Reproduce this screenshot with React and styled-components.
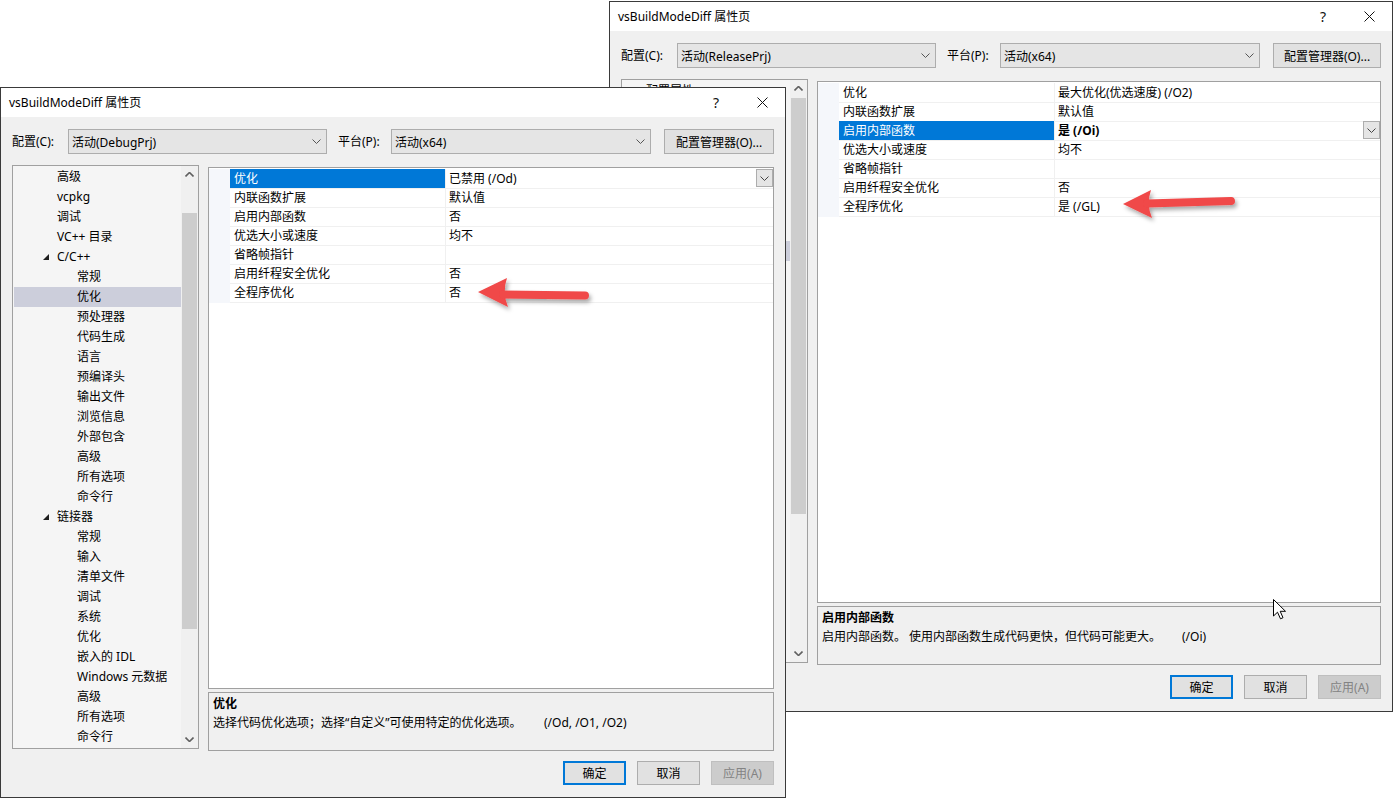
import React from 'react';
import styled, { createGlobalStyle } from 'styled-components';

const GlobalStyle = createGlobalStyle`
  html, body { margin: 0; padding: 0; background: #fff; }
  body {
    font-family: "Noto Sans", "Noto Sans CJK SC", sans-serif;
    font-size: 12px;
    color: #000;
  }
`;

const Desktop = styled.div`
  position: relative;
  width: 1395px;
  height: 798px;
  overflow: hidden;
  background: #fff;
`;

// dialogs are windows on a desktop, so they sit at their own coordinates
const Window = styled.div`
  position: absolute;
  left: ${p => p.$left}px;
  top: ${p => p.$top}px;
  width: ${p => p.$width}px;
  height: ${p => p.$height}px;
  box-sizing: border-box;
  border: 1px solid #3a3a3a;
  background: #f0f0f0;
  display: flex;
  flex-direction: column;
`;

const TitleBar = styled.div`
  height: 29px;
  flex-shrink: 0;
  background: #fff;
  display: flex;
  align-items: center;
  padding-left: 8px;
`;

const Title = styled.div`
  flex: 1;
  line-height: 16px;
  white-space: nowrap;
`;

const CaptionButton = styled.div`
  width: 46px;
  height: 29px;
  display: flex;
  align-items: center;
  justify-content: center;
  font-size: 14px;
  color: #111;
`;

const Body = styled.div`
  flex: 1;
  display: flex;
  flex-direction: column;
  padding: 12px 11px 0 11px;
`;

const Toolbar = styled.div`
  display: flex;
  align-items: center;
  height: 25px;
`;

const Label = styled.div`
  width: ${p => p.$w}px;
  margin-left: ${p => p.$ml || 0}px;
  flex-shrink: 0;
  white-space: nowrap;
  line-height: 16px;
`;

const Combo = styled.div`
  width: ${p => p.$w}px;
  height: 25px;
  box-sizing: border-box;
  flex-shrink: 0;
  border: 1px solid #adadad;
  background: #e5e5e5;
  display: flex;
  align-items: center;
  justify-content: space-between;
  padding: 0 5px 0 3px;
  white-space: nowrap;
`;

const ToolButton = styled.div`
  width: 110px;
  height: 25px;
  box-sizing: border-box;
  margin-left: 13px;
  border: 1px solid #adadad;
  background: #e1e1e1;
  display: flex;
  align-items: center;
  justify-content: center;
  white-space: nowrap;
`;

const Main = styled.div`
  margin-top: 11px;
  height: 586px;
  display: grid;
  grid-template-columns: 187px 1fr;
  column-gap: 9px;
`;

const Tree = styled.div`
  height: 584px;
  box-sizing: border-box;
  border: 1px solid #a0a0a0;
  background: #f5f5f5;
  display: flex;
  overflow: hidden;
`;

const TreeList = styled.div`
  flex: 1;
  padding: 1px 0 0 1px;
  overflow: hidden;
`;

const TreeItem = styled.div`
  height: 20px;
  display: flex;
  align-items: center;
  padding-left: ${p => 9 + p.$level * 20}px;
  background: ${p => (p.$selected ? '#cccedb' : 'transparent')};
  white-space: nowrap;
  line-height: 20px;
`;

const Twisty = styled.div`
  width: 14px;
  flex-shrink: 0;
  display: flex;
  align-items: center;
`;

const ScrollBar = styled.div`
  width: 17px;
  flex-shrink: 0;
  background: #f0f0f0;
  display: flex;
  flex-direction: column;
`;

const ScrollArrow = styled.div`
  height: 17px;
  display: flex;
  align-items: center;
  justify-content: center;
`;

const ScrollTrack = styled.div`
  flex: 1;
  display: flex;
  flex-direction: column;
  align-items: center;
`;

const ScrollThumb = styled.div`
  width: 15px;
  margin-top: ${p => p.$offset}px;
  height: ${p => p.$size}px;
  background: #cdcdcd;
`;

const RightColumn = styled.div`
  padding-top: 2px;
  display: flex;
  flex-direction: column;
  gap: 3px;
`;

const Grid = styled.div`
  height: 522px;
  box-sizing: border-box;
  border: 1px solid #a0a0a0;
  padding-top: 1px;
  background: #fff;
  overflow: hidden;
`;

const GridRow = styled.div`
  display: grid;
  grid-template-columns: 21px 215px 1fr;
  height: 19px;
`;

const MarginCell = styled.div`
  background: #f5f7fb;
`;

const NameCell = styled.div`
  box-sizing: border-box;
  border-bottom: 1px solid #f0f0f0;
  padding-left: 4px;
  line-height: 19px;
  white-space: nowrap;
  background: ${p => (p.$selected ? '#0078d7' : 'transparent')};
  color: ${p => (p.$selected ? '#fff' : '#000')};
`;

const ValueCell = styled.div`
  box-sizing: border-box;
  border-left: 1px solid #f0f0f0;
  border-bottom: 1px solid #f0f0f0;
  padding-left: 3px;
  display: flex;
  justify-content: space-between;
  line-height: 19px;
  white-space: nowrap;
  font-weight: ${p => (p.$bold ? 700 : 400)};
`;

const DropButton = styled.div`
  width: 17px;
  height: 18px;
  box-sizing: border-box;
  border: 1px solid #adadad;
  background: #e5e5e5;
  display: flex;
  align-items: center;
  justify-content: center;
`;

const Desc = styled.div`
  height: 59px;
  box-sizing: border-box;
  border: 1px solid #a0a0a0;
  padding: 2px 4px;
`;

const DescTitle = styled.div`
  font-weight: 700;
  line-height: 17px;
`;

const DescText = styled.div`
  margin-top: 2px;
  display: flex;
  line-height: 17px;
  white-space: nowrap;
`;

const DescMain = styled.span`
  width: ${p => p.$w}px;
  flex-shrink: 0;
`;

const ButtonRow = styled.div`
  margin-top: 10px;
  display: flex;
  justify-content: flex-end;
  gap: 11px;
`;

const DlgButton = styled.div`
  width: 63px;
  height: 24px;
  box-sizing: border-box;
  display: flex;
  align-items: center;
  justify-content: center;
  background: ${p => (p.$disabled ? '#cccccc' : '#e1e1e1')};
  border: ${p => (p.$primary ? '2px solid #0078d7' : p.$disabled ? '1px solid #bfbfbf' : '1px solid #adadad')};
  color: ${p => (p.$disabled ? '#838383' : '#000')};
`;

const Overlay = styled.svg`
  position: absolute;
  left: 0;
  top: 0;
  pointer-events: none;
`;

const Chevron = ({ up, color = '#606060', w = 8, sw = 1 }) => (
  <svg width={w + 1} height={w / 2 + 1} viewBox={`0 0 ${w + 1} ${w / 2 + 1}`}>
    <path
      d={up ? `M0.5 ${w / 2 + 0.5} L${w / 2 + 0.5} 0.5 L${w + 0.5} ${w / 2 + 0.5}` : `M0.5 0.5 L${w / 2 + 0.5} ${w / 2 + 0.5} L${w + 0.5} 0.5`}
      fill="none"
      stroke={color}
      strokeWidth={sw}
    />
  </svg>
);

const Triangle = () => (
  <svg width="6" height="6" viewBox="0 0 6 6">
    <polygon points="6,0 6,6 0,6" fill="#1e1e1e" />
  </svg>
);

const CloseGlyph = () => (
  <svg width="11" height="11" viewBox="0 0 11 11">
    <path d="M0.5 0.5 L10.5 10.5 M10.5 0.5 L0.5 10.5" stroke="#111" strokeWidth="1" />
  </svg>
);

const rowNames = ['优化', '内联函数扩展', '启用内部函数', '优选大小或速度', '省略帧指针', '启用纤程安全优化', '全程序优化'];

const debugTree = [
  ['高级', 1], ['vcpkg', 1], ['调试', 1], ['VC++ 目录', 1], ['C/C++', 1, 'open'],
  ['常规', 2], ['优化', 2, 'sel'], ['预处理器', 2], ['代码生成', 2], ['语言', 2], ['预编译头', 2],
  ['输出文件', 2], ['浏览信息', 2], ['外部包含', 2], ['高级', 2], ['所有选项', 2], ['命令行', 2],
  ['链接器', 1, 'open'], ['常规', 2], ['输入', 2], ['清单文件', 2], ['调试', 2], ['系统', 2],
  ['优化', 2], ['嵌入的 IDL', 2], ['Windows 元数据', 2], ['高级', 2], ['所有选项', 2], ['命令行', 2],
];

const releaseTree = [
  ['配置属性', 0, 'open'], ['常规', 1], ['高级', 1], ['vcpkg', 1], ['调试', 1], ['VC++ 目录', 1],
  ['C/C++', 1, 'open'], ['常规', 2], ['优化', 2, 'sel'], ['预处理器', 2], ['代码生成', 2], ['语言', 2],
  ['预编译头', 2], ['输出文件', 2], ['浏览信息', 2], ['外部包含', 2], ['高级', 2], ['所有选项', 2],
  ['命令行', 2], ['链接器', 1, 'open'], ['常规', 2], ['输入', 2], ['清单文件', 2], ['调试', 2],
  ['系统', 2], ['优化', 2], ['嵌入的 IDL', 2], ['Windows 元数据', 2], ['高级', 2],
];

const debugDialog = {
  left: 0, top: 87, width: 786, height: 711,
  config: '活动(DebugPrj)',
  tree: debugTree,
  thumb: [30, 416],
  selectedRow: 0,
  values: ['已禁用 (/Od)', '默认值', '否', '均不', '', '否', '否'],
  bold: [],
  descTitle: '优化',
  descText: '选择代码优化选项；选择“自定义”可使用特定的优化选项。',
  descWidth: 331,
  descCode: '(/Od, /O1, /O2)',
};

const releaseDialog = {
  left: 609, top: 1, width: 784, height: 711,
  config: '活动(ReleasePrj)',
  tree: releaseTree,
  thumb: [1, 416],
  selectedRow: 2,
  values: ['最大优化(优选速度) (/O2)', '默认值', '是 (/Oi)', '均不', '', '否', '是 (/GL)'],
  bold: [2],
  descTitle: '启用内部函数',
  descText: '启用内部函数。 使用内部函数生成代码更快，但代码可能更大。',
  descWidth: 360,
  descCode: '(/Oi)',
};

function PropertyDialog({ d }) {
  return (
    <Window $left={d.left} $top={d.top} $width={d.width} $height={d.height}>
      <TitleBar>
        <Title>vsBuildModeDiff 属性页</Title>
        <CaptionButton>?</CaptionButton>
        <CaptionButton><CloseGlyph /></CaptionButton>
      </TitleBar>
      <Body>
        <Toolbar>
          <Label $w={56}>配置(C):</Label>
          <Combo $w={259}>
            <span>{d.config}</span>
            <Chevron color="#555" />
          </Combo>
          <Label $w={53} $ml={11}>平台(P):</Label>
          <Combo $w={260}>
            <span>活动(x64)</span>
            <Chevron color="#555" />
          </Combo>
          <ToolButton>配置管理器(O)...</ToolButton>
        </Toolbar>
        <Main>
          <Tree>
            <TreeList>
              {d.tree.map(([text, level, flag], i) => (
                <TreeItem key={i} $level={level} $selected={flag === 'sel'}>
                  <Twisty>{flag === 'open' && <Triangle />}</Twisty>
                  {text}
                </TreeItem>
              ))}
            </TreeList>
            <ScrollBar>
              <ScrollArrow><Chevron up w={8} sw={1.6} /></ScrollArrow>
              <ScrollTrack>
                <ScrollThumb $offset={d.thumb[0]} $size={d.thumb[1]} />
              </ScrollTrack>
              <ScrollArrow><Chevron w={8} sw={1.6} /></ScrollArrow>
            </ScrollBar>
          </Tree>
          <RightColumn>
            <Grid>
              {rowNames.map((name, i) => (
                <GridRow key={i}>
                  <MarginCell />
                  <NameCell $selected={i === d.selectedRow}>{name}</NameCell>
                  <ValueCell $bold={d.bold.includes(i)}>
                    <span>{d.values[i]}</span>
                    {i === d.selectedRow && (
                      <DropButton><Chevron color="#444" /></DropButton>
                    )}
                  </ValueCell>
                </GridRow>
              ))}
            </Grid>
            <Desc>
              <DescTitle>{d.descTitle}</DescTitle>
              <DescText>
                <DescMain $w={d.descWidth}>{d.descText}</DescMain>
                <span>{d.descCode}</span>
              </DescText>
            </Desc>
          </RightColumn>
        </Main>
        <ButtonRow>
          <DlgButton $primary>确定</DlgButton>
          <DlgButton>取消</DlgButton>
          <DlgButton $disabled>应用(A)</DlgButton>
        </ButtonRow>
      </Body>
    </Window>
  );
}

export default function App() {
  return (
    <Desktop>
      <GlobalStyle />
      <PropertyDialog d={releaseDialog} />
      <PropertyDialog d={debugDialog} />
      <Overlay width="1395" height="798" viewBox="0 0 1395 798">
        <defs>
          <filter id="arrowShadow" x="-20%" y="-50%" width="140%" height="200%">
            <feDropShadow dx="2" dy="3" stdDeviation="2" floodColor="#000" floodOpacity="0.35" />
          </filter>
        </defs>
        <g fill="#f04848" filter="url(#arrowShadow)">
          <path d="M478 292 L507 278 Q502 292 508 307 Z" />
          <path d="M503 294.5 L585 295.5" stroke="#f04848" strokeWidth="8" strokeLinecap="round" />
        </g>
        <g fill="#f04848" filter="url(#arrowShadow)">
          <path d="M1123 204 L1151 190 Q1146 204 1152 218 Z" />
          <path d="M1147 203.5 L1231 201" stroke="#f04848" strokeWidth="8" strokeLinecap="round" />
        </g>
        <path
          d="M1273.5 599.5 L1273.5 616 L1277.5 612.2 L1280.5 618.8 L1283 617.7 L1280.2 611.3 L1285.5 611.3 Z"
          fill="#fff"
          stroke="#000"
          strokeWidth="1"
        />
      </Overlay>
    </Desktop>
  );
}
